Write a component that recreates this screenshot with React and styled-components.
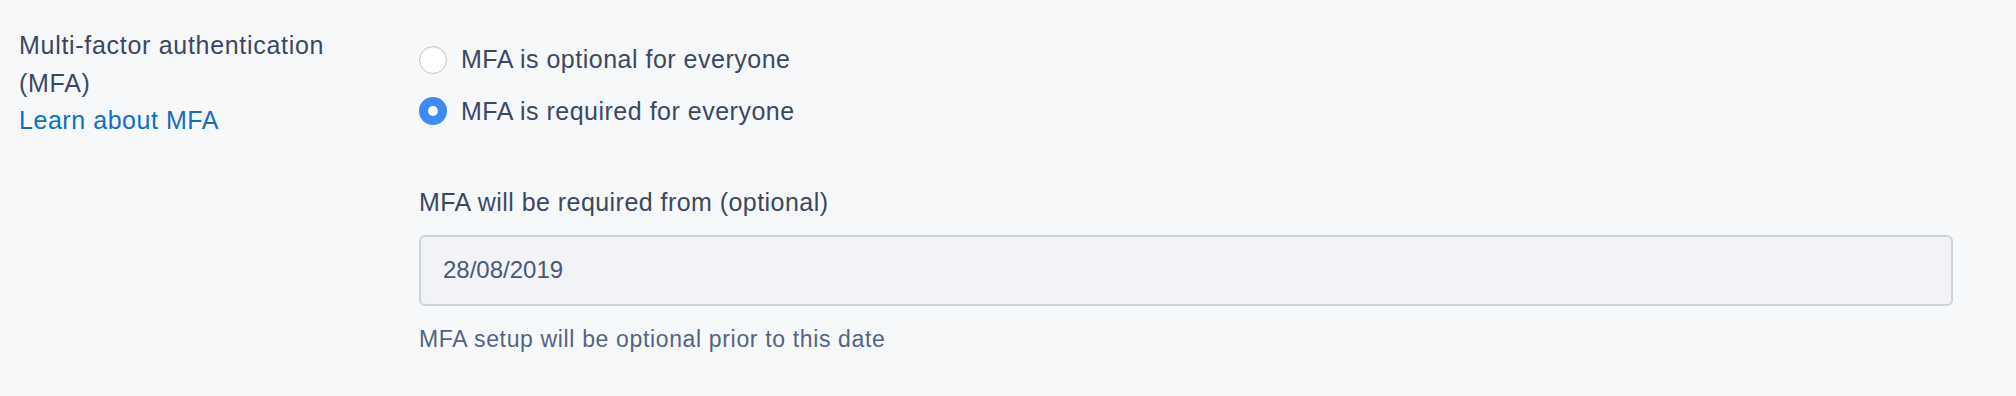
import styled, { createGlobalStyle } from "styled-components";

const GlobalStyle = createGlobalStyle`
    body {
        margin: 0;
        background: #f7f8fa;
        font-family: "Liberation Sans", Arial, Helvetica, sans-serif;
        color: #3b4861;
    }
`;

function App() {
    return (
        <>
            <GlobalStyle />
            <Row>
                <LabelColumn>
                    <Title>Multi-factor authentication (MFA)</Title>
                    <Link href="#">Learn about MFA</Link>
                </LabelColumn>

                <FieldColumn>
                    <RadioGroup>
                        <RadioRow>
                            <Radio />
                            <span>MFA is optional for everyone</span>
                        </RadioRow>
                        <RadioRow>
                            <Radio checked />
                            <span>MFA is required for everyone</span>
                        </RadioRow>
                    </RadioGroup>

                    <DateField>
                        <FieldLabel>MFA will be required from (optional)</FieldLabel>
                        <DateInput>28/08/2019</DateInput>
                        <Hint>MFA setup will be optional prior to this date</Hint>
                    </DateField>
                </FieldColumn>
            </Row>
        </>
    );
}

export default App;

const Row = styled.div`
    display: grid;
    grid-template-columns: 400px 1fr;
    padding: 27px 63px 0 19px;
    font-size: 25px;
    line-height: 37.5px;
    letter-spacing: 0.45px;
`;

const LabelColumn = styled.div`
    display: flex;
    flex-direction: column;
    width: 340px;
`;

const Title = styled.div`
    color: #3b4861;
    letter-spacing: 0.7px;
`;

const Link = styled.a`
    color: #0f6fc6;
    text-decoration: none;
    letter-spacing: 0.55px;
`;

const FieldColumn = styled.div`
    display: flex;
    flex-direction: column;
    padding-top: 14px;
`;

const RadioGroup = styled.div`
    display: flex;
    flex-direction: column;
    gap: 14px;
`;

const RadioRow = styled.label`
    display: flex;
    align-items: center;
    gap: 14px;
    color: #3b4861;
    letter-spacing: 0.5px;
`;

const Radio = styled.span`
    position: relative;
    width: 28px;
    height: 28px;
    box-sizing: border-box;
    border-radius: 50%;
    flex-shrink: 0;
    background: ${(props) => (props.checked ? "#3f8af6" : "#ffffff")};
    border: ${(props) => (props.checked ? "none" : "1.5px solid #c4c6ca")};
    box-shadow: ${(props) => (props.checked ? "none" : "inset 0 1px 2px rgba(0, 0, 0, 0.08)")};

    &::after {
        content: "";
        display: ${(props) => (props.checked ? "block" : "none")};
        position: absolute;
        left: 50%;
        top: 50%;
        width: 10px;
        height: 10px;
        margin: -5px 0 0 -5px;
        border-radius: 50%;
        background: #ffffff;
    }
`;

const DateField = styled.div`
    display: flex;
    flex-direction: column;
    margin-top: 54px;
`;

const FieldLabel = styled.div`
    color: #3b4861;
    margin-bottom: 13px;
    letter-spacing: 0.45px;
`;

const DateInput = styled.div`
    display: flex;
    align-items: center;
    box-sizing: border-box;
    height: 71px;
    padding: 0 22px;
    background: #f1f3f7;
    border: 2px solid #cdd3de;
    border-radius: 6px;
    font-size: 24px;
    letter-spacing: 0;
    color: #4a5873;
`;

const Hint = styled.div`
    margin-top: 16px;
    font-size: 23px;
    line-height: 34px;
    letter-spacing: 0.65px;
    color: #536483;
`;
